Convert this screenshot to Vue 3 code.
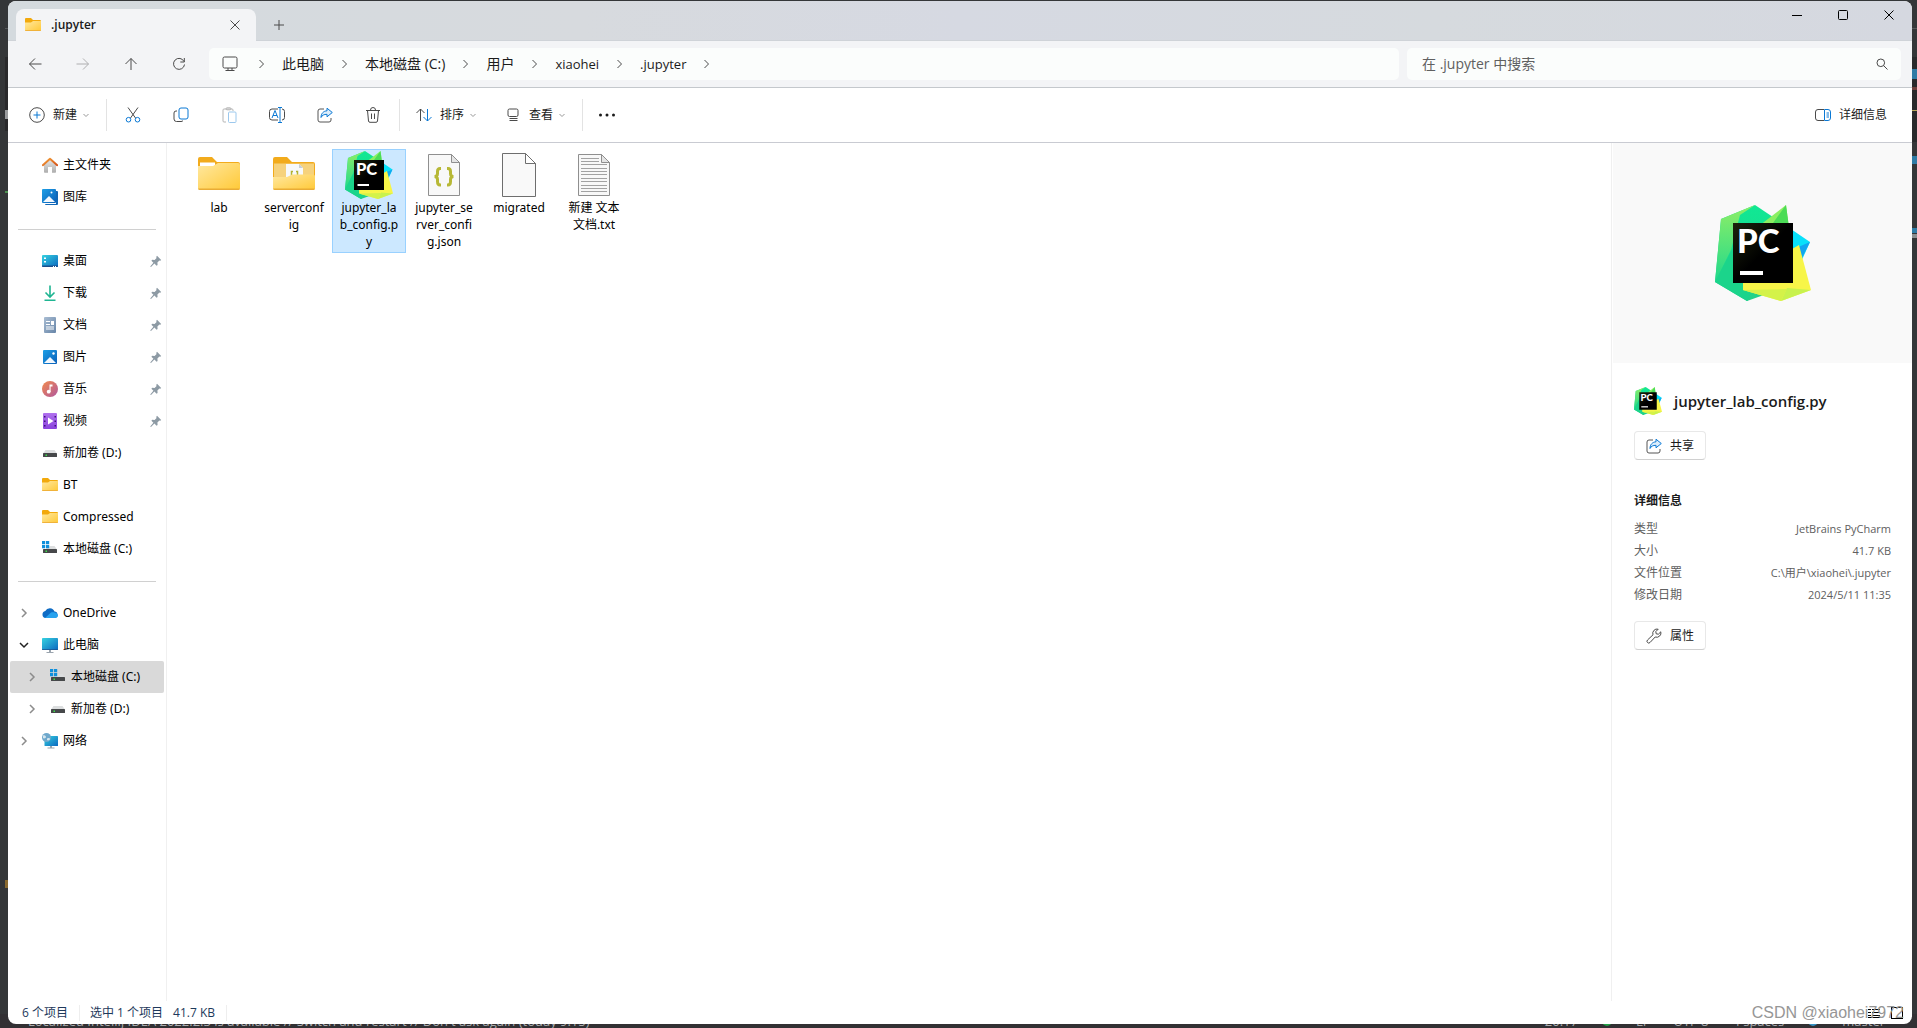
<template>
  <div class="desktop">
    <div class="ide" aria-hidden="true">
      <div class="ide-left">
        <span v-for="mark in leftMarks" class="mark" :style="{ top: mark.y + 'px', height: mark.h + 'px', background: mark.color }"></span>
      </div>
      <div class="ide-right">
        <span v-for="mark in rightMarks" class="mark" :style="{ top: mark.y + 'px', height: mark.h + 'px', background: mark.color }"></span>
      </div>
      <div class="ide-bar">
        <span class="ide-msg">Localized IntelliJ IDEA 2022.2.3 is available // Switch and restart // Don't ask again (today 9:15)</span>
        <span>20:17</span>
        <span class="ide-dot"></span>
        <span>LF</span>
        <span>UTF-8</span>
        <span>4 spaces</span>
        <span class="ide-branch"></span>
        <span>master</span>
      </div>
    </div>

    <svg class="defs" width="0" height="0" aria-hidden="true">
      <defs>
        <linearGradient id="gFolder" x1="0" y1="0" x2="1" y2="1"><stop offset="0" stop-color="#ffe8a0" /><stop offset="1" stop-color="#ffc937" /></linearGradient>
        <linearGradient id="gBlue" x1="0" y1="0" x2="1" y2="1"><stop offset="0" stop-color="#1d9fe6" /><stop offset="1" stop-color="#0a5fb8" /></linearGradient>
        <linearGradient id="gTeal" x1="0" y1="0" x2="1" y2="1"><stop offset="0" stop-color="#35d2e0" /><stop offset="1" stop-color="#0c68c0" /></linearGradient>
        <linearGradient id="gDoc" x1="0" y1="0" x2="1" y2="1"><stop offset="0" stop-color="#a9bdd3" /><stop offset="1" stop-color="#6785a8" /></linearGradient>
        <linearGradient id="gMusic" x1="0" y1="0" x2="1" y2="1"><stop offset="0" stop-color="#f28a4b" /><stop offset="1" stop-color="#b0579f" /></linearGradient>
        <linearGradient id="gVideo" x1="0" y1="0" x2="0" y2="1"><stop offset="0" stop-color="#b070ee" /><stop offset="1" stop-color="#8a44dd" /></linearGradient>
        <linearGradient id="gRoof" x1="0" y1="0" x2="1" y2="1"><stop offset="0" stop-color="#f5a33a" /><stop offset="1" stop-color="#d4521a" /></linearGradient>
        <linearGradient id="gHouse" x1="0" y1="0" x2="0" y2="1"><stop offset="0" stop-color="#e8e8e8" /><stop offset="1" stop-color="#adadad" /></linearGradient>
        <linearGradient id="gPcGreen" x1="0" y1="0" x2="0" y2="1"><stop offset="0" stop-color="#10e894" /><stop offset="1" stop-color="#22d088" /></linearGradient>
        <linearGradient id="gPcSide" x1="0" y1="0" x2="0" y2="1"><stop offset="0" stop-color="#8fee66" /><stop offset="1" stop-color="#1ed98c" /></linearGradient>
        <linearGradient id="gPcBlack" x1="0" y1="0" x2="1" y2="1"><stop offset="0" stop-color="#1c240c" /><stop offset="0.5" stop-color="#000" /></linearGradient>

        <symbol id="folder" viewBox="0 0 16 16">
          <path d="M0 2a1 1 0 0 1 1-1h5l2 2h7a1 1 0 0 1 1 1v8H0z" fill="#f2a90c" />
          <path d="M0 5.500h6L8 4h8v9a1 1 0 0 1-1 1H1a1 1 0 0 1-1-1z" fill="url(#gFolder)" />
          <path d="M0 13h16a1 1 0 0 1-1 1H1a1 1 0 0 1-1-1z" fill="#f0b23a" />
        </symbol>
        <symbol id="home" viewBox="0 0 16 16">
          <path d="M2 7l6-5 6 5v8a.8.8 0 0 1-.8.8H10V10H6v5.800H2.800A.8.8 0 0 1 2 15z" fill="url(#gHouse)" />
          <path d="M.8 8.200L8 1.700l7.200 6.500" fill="none" stroke="url(#gRoof)" stroke-width="2" stroke-linecap="round" stroke-linejoin="round" />
        </symbol>
        <symbol id="gallery" viewBox="0 0 16 16">
          <path d="M14 2h1a1 1 0 0 1 1 1v12a1 1 0 0 1-1 1H4a1 1 0 0 1-1-1h11z" fill="#1267b5" />
          <rect width="14" height="14" rx="1" fill="url(#gBlue)" />
          <path d="M1 13l6-6 6 6z" fill="#f3f8fd" /><circle cx="9.500" cy="3.500" r="1" fill="#fff" />
        </symbol>
        <symbol id="desktop" viewBox="0 0 16 16">
          <rect y="2" width="16" height="12" rx="1" fill="url(#gTeal)" />
          <path d="M0 12.500h16V13a1 1 0 0 1-1 1H1a1 1 0 0 1-1-1z" fill="#1b4f8c" />
          <path d="M2 4.500h2v1.500H2zM2 8h2v1.500H2zM11 13h1v1h-1zM13 13h1v1h-1z" fill="#fff" />
        </symbol>
        <symbol id="download" viewBox="0 0 16 16">
          <path d="M8 .5v11M3.500 7.500L8 12l4.500-4.500M2.500 15.200h11" fill="none" stroke="#1fb592" stroke-width="1.600" />
        </symbol>
        <symbol id="document" viewBox="0 0 16 16">
          <rect x="2" width="12" height="16" rx="1" fill="url(#gDoc)" />
          <path d="M4 4.500h4M4 7.500h4M4 10h8M4 12h8" stroke="#fff" fill="none" /><path d="M9 4h3v4H9z" fill="#fff" />
        </symbol>
        <symbol id="picture" viewBox="0 0 16 16">
          <rect x="1" y="1" width="14" height="14" rx="1" fill="url(#gBlue)" />
          <path d="M2 14l6-6 6 6z" fill="#f3f8fd" /><circle cx="11.500" cy="4.500" r="1.200" fill="#fff" />
        </symbol>
        <symbol id="music" viewBox="0 0 16 16">
          <circle cx="8" cy="8" r="8" fill="url(#gMusic)" />
          <circle cx="6.700" cy="10.700" r="1.900" fill="#fff" /><path d="M7.500 3.500h3v2H8.600v5.500H7.500z" fill="#fff" />
        </symbol>
        <symbol id="video" viewBox="0 0 16 16">
          <rect x="1" width="14" height="16" rx="1" fill="url(#gVideo)" />
          <path d="M2 3h1.500v1.500H2zM2 7.500h1.500V9H2zM2 12h1.500v1.500H2zM12.500 3H14v1.500h-1.500zM12.500 7.500H14V9h-1.500zM12.500 12H14v1.500h-1.500z" fill="#3c1478" />
          <path d="M6 4.500l5.500 3.500L6 11.500z" fill="#fff" />
        </symbol>
        <symbol id="drive" viewBox="0 0 16 16">
          <path d="M3.500 5h9L15 8.500H1z" fill="#dcdedf" />
          <rect x="1" y="8" width="14" height="4" rx=".6" fill="#46484a" /><rect x="3.500" y="9.500" width="1.500" height="1.500" fill="#3ce04a" />
        </symbol>
        <symbol id="sysdrive" viewBox="0 0 16 16">
          <path d="M8 5h4.500L15 8.500H3z" fill="#dcdedf" />
          <path d="M0 0h3.200v3.200H0zM4 0h3.200v3.200H4zM0 4h3.200v3.200H0zM4 4h3.200v3.200H4z" fill="#1090dc" />
          <rect x="1" y="8" width="14" height="4" rx=".6" fill="#46484a" /><rect x="3.500" y="9.500" width="1.500" height="1.500" fill="#3ce04a" />
        </symbol>
        <symbol id="cloud" viewBox="0 0 16 16">
          <path d="M3.500 13A3.500 3.500 0 0 1 3.300 6.100 5 5 0 0 1 12.500 6.500 3.300 3.300 0 0 1 13 13z" fill="#0f6cc4" />
          <path d="M3 13l6-5.500c3-1 7 .5 7 3 0 1.500-1.200 2.500-2.700 2.500z" fill="#27a2ee" />
        </symbol>
        <symbol id="pc" viewBox="0 0 16 16">
          <rect y="1" width="16" height="12" rx=".8" fill="url(#gTeal)" />
          <path d="M0 12.300h16v.7H0z" fill="#1b4f8c" /><path d="M7 13h2v2h2.500v1h-7v-1H7z" fill="#9aa4ae" />
        </symbol>
        <symbol id="network" viewBox="0 0 16 16">
          <rect x="2.500" y="3" width="13.500" height="10" rx=".6" fill="url(#gTeal)" />
          <path d="M8 13h2v1.500h2.500v1h-7v-1H8z" fill="#9aa4ae" />
          <circle cx="4.500" cy="4.500" r="4.500" fill="#6ea8cc" /><path d="M1 2.500c2-1 3 .5 3 1.500S2 6 1 5zM5 5.500c1-1 3-.5 3 .5s-2 2-3 1z" fill="#d4e6ee" />
        </symbol>
        <symbol id="pin" viewBox="0 0 12 12">
          <path d="M7 .8l4.200 4.200-1 .8-.8-.2-2 2 .2 2.400-1 .8-2.200-2.200L1 12l-.8-.6 3.200-3.600-2-2 .8-1 2.400.2 2-2-.4-1z" fill="#8d9aa4" />
        </symbol>
        <symbol id="share" viewBox="0 0 16 16">
          <path d="M7 2H3a2 2 0 0 0-2 2v9a2 2 0 0 0 2 2h9a2 2 0 0 0 2-2v-2" fill="none" stroke="#555" />
          <path d="M10 1.200L15.300 5.500 10 9.800V7.300C7 7.300 5 8.300 4 10.500 4 6.500 6.500 4 10 3.800z" fill="#dcedfb" stroke="#0a78d4" stroke-linejoin="round" />
        </symbol>
        <symbol id="pycharm" viewBox="0 0 96 96">
          <path d="M70 20l25 17-9 20-30-2z" fill="#08e0fa" /><path d="M95 37l-9 18-5-12z" fill="#12a5f0" />
          <path d="M28 82l16 2-12 12z" fill="#149fbd" />
          <path d="M6 14L40 0l30 20-10 66-28 10L0 77z" fill="url(#gPcGreen)" />
          <path d="M6 14L40 0 25 10 16 45 0 77z" fill="url(#gPcSide)" />
          <path d="M0 77l18-34 20 42-6 11z" fill="#1bd48b" />
          <path d="M36 27L71 0l4 30z" fill="#8bef62" /><path d="M71 0l4 30-22-5z" fill="#4bdc56" />
          <path d="M28 72l56-32 12 45-30 11-38-11z" fill="#f7f548" /><path d="M66 96l6-13 24 2z" fill="#c8f24e" /><path d="M28 85l38 11 6-12z" fill="#d4f249" />
          <rect x="18" y="18" width="60" height="60" fill="url(#gPcBlack)" />
          <text x="22" y="48" font-family="Lato, 'Open Sans', sans-serif" font-weight="900" font-size="33" fill="#fff">PC</text>
          <path d="M25 66h23v4H25z" fill="#fff" />
        </symbol>
        <symbol id="bigfolder" viewBox="0 0 48 48">
          <path d="M3 8a2 2 0 0 1 2-2h12l5 5h21a2 2 0 0 1 2 2v20H3z" fill="#f2ab1c" />
          <path d="M5 11.500h15v4H5z" fill="#fff" />
          <path d="M3 15h15l5-3h20a2 2 0 0 1 2 2v23a2 2 0 0 1-2 2H5a2 2 0 0 1-2-2z" fill="url(#gFolder)" />
          <path d="M3 37.500h42a2 2 0 0 1-2 1.500H5a2 2 0 0 1-2-1.500z" fill="#e9ac35" />
        </symbol>
        <symbol id="fullfolder" viewBox="0 0 48 48">
          <path d="M3 8a2 2 0 0 1 2-2h12l5 5h21a2 2 0 0 1 2 2v20H3z" fill="#f2ab1c" />
          <path d="M4 12.500h40v20H4z" fill="#f6d27c" />
          <path d="M16 13h13l4 4v12H16z" fill="#f7f9fb" /><path d="M29 13l4 4h-4z" fill="#c6ced6" />
          <path d="M23 20.500h-1.500v4M26 20.500h1.500v4" stroke="#b3b234" stroke-width="1.500" fill="none" />
          <path d="M3 26h14l5-2.500h21a2 2 0 0 1 2 2V37a2 2 0 0 1-2 2H5a2 2 0 0 1-2-2z" fill="url(#gFolder)" />
          <path d="M3 37.500h42a2 2 0 0 1-2 1.500H5a2 2 0 0 1-2-1.500z" fill="#e9ac35" />
        </symbol>
        <symbol id="json" viewBox="0 0 48 48">
          <path d="M8.500 3.500h23l8 8v33h-31z" fill="#f8f8f8" stroke="#8f8f8f" /><path d="M31.500 3.500v8h8z" fill="#e4e4e4" stroke="#8f8f8f" />
          <path d="M21 17.500h-1c-2 0-2.500 1-2.500 3v2c0 2-1 3-3 3 2 0 3 1 3 3v2c0 2 .5 3.500 2.500 3.500h1M27 17.500h1c2 0 2.500 1 2.500 3v2c0 2 1 3 3 3-2 0-3 1-3 3v2c0 2-.5 3.500-2.500 3.500h-1" fill="none" stroke="#b7b836" stroke-width="3" />
        </symbol>
        <symbol id="blank" viewBox="0 0 48 48">
          <path d="M7.500 2.500h23l10 10v33h-33z" fill="#f9f9f9" stroke="#6e6e6e" /><path d="M30.500 2.500v10h10z" fill="#fff" stroke="#6e6e6e" />
        </symbol>
        <symbol id="text" viewBox="0 0 48 48">
          <path d="M8.500 3.500h23l8 8v33h-31z" fill="#f8f8f8" stroke="#8f8f8f" /><path d="M31.500 3.500v8h8z" fill="#e4e4e4" stroke="#8f8f8f" />
          <path d="M11 7.500h18M11 10.500h18M11 13.500h26M11 17.500h26M11 20.500h26M11 23.500h26M11 27.500h26M11 30.500h26M11 34.500h26M11 37.500h26M11 40.500h26" stroke="#a2a2a2" fill="none" />
        </symbol>
      </defs>
    </svg>

    <main class="window">
      <header class="titlebar">
        <div class="tab">
          <svg class="i16"><use href="#folder" /></svg>
          <span class="tab-title">.jupyter</span>
          <button class="tab-btn" aria-label="关闭标签页">
            <svg class="i10" viewBox="0 0 10 10"><path d="M.5 .5l9 9M9.500 .5l-9 9" /></svg>
          </button>
        </div>
        <button class="tab-btn add" aria-label="新标签页">
          <svg class="i10" viewBox="0 0 10 10"><path d="M5 0v10M0 5h10" /></svg>
        </button>
        <div class="controls">
          <button aria-label="最小化"><svg class="i10" viewBox="0 0 10 10"><path d="M0 5.500h10" /></svg></button>
          <button aria-label="最大化"><svg class="i10" viewBox="0 0 10 10"><rect x=".5" y=".5" width="9" height="9" rx="1" /></svg></button>
          <button aria-label="关闭"><svg class="i10" viewBox="0 0 10 10"><path d="M.5 .5l9 9M9.500 .5l-9 9" /></svg></button>
        </div>
      </header>

      <nav class="navbar">
        <button class="nav-btn" aria-label="后退"><svg class="i16" viewBox="0 0 16 16"><path d="M14.500 8h-12M8 2.500L2.500 8 8 13.500" /></svg></button>
        <button class="nav-btn" aria-label="前进" disabled><svg class="i16" viewBox="0 0 16 16"><path d="M1.500 8h12M8 2.500L13.500 8 8 13.500" /></svg></button>
        <button class="nav-btn" aria-label="向上"><svg class="i16" viewBox="0 0 16 16"><path d="M8 14V2.500M2.500 8L8 2.500 13.500 8" /></svg></button>
        <button class="nav-btn" aria-label="刷新"><svg class="i16" viewBox="0 0 16 16"><path d="M13 5.500A5.500 5.500 0 1 0 13.500 8.500M13.300 2v4h-4" /></svg></button>
        <div class="address">
          <svg class="i16 monitor" viewBox="0 0 16 16"><rect x="1" y="1" width="14" height="11" rx="1.500" /><path d="M6 12v2.500M10 12v2.500M3.500 14.500h9" /></svg>
          <template v-for="crumb in crumbs">
            <svg class="crumb-sep" viewBox="0 0 8 10"><path d="M2 1l4 4-4 4" /></svg>
            <a href="#" :class="{ latin: crumb.latin }">{{ crumb.name }}</a>
          </template>
          <svg class="crumb-sep" viewBox="0 0 8 10"><path d="M2 1l4 4-4 4" /></svg>
        </div>
        <div class="search">
          <input type="text" aria-label="搜索" placeholder="在 .jupyter 中搜索">
          <svg class="i12" viewBox="0 0 12 12"><circle cx="4.800" cy="4.800" r="3.800" /><path d="M7.500 7.500L11.500 11.500" /></svg>
        </div>
      </nav>

      <div class="toolbar">
        <button class="tool">
          <svg class="i16" viewBox="0 0 16 16"><circle cx="8" cy="8" r="7.300" /><path class="blue" d="M8 4.500v7M4.500 8h7" /></svg>
          新建
          <svg class="caret" viewBox="0 0 8 8"><path d="M1.500 3L4 5.500 6.500 3" /></svg>
        </button>
        <span class="sep"></span>
        <button class="icon-tool" aria-label="剪切">
          <svg class="i16" viewBox="0 0 16 16"><path d="M3 .5l7.500 10.500M13 .5L5.500 11" /><g class="blue"><circle cx="3.500" cy="12.700" r="2.300" /><circle cx="12.500" cy="12.700" r="2.300" /></g></svg>
        </button>
        <button class="icon-tool" aria-label="复制">
          <svg class="i16" viewBox="0 0 16 16"><path d="M4 4H3a2 2 0 0 0-2 2v6a2.500 2.500 0 0 0 2.500 2.500H8a2 2 0 0 0 2-1" /><rect class="blue" x="6" y="1" width="9" height="11" rx="2" /></svg>
        </button>
        <button class="icon-tool" aria-label="粘贴" disabled>
          <svg class="i16" viewBox="0 0 16 16"><path d="M5 15H3a1 1 0 0 1-1-1V3a1 1 0 0 1 1-1h8a1 1 0 0 1 1 1v1" /><rect x="5" y=".8" width="5" height="2" rx="1" /><rect class="blue" x="7.500" y="5" width="7.500" height="10.500" rx="1" /></svg>
        </button>
        <button class="icon-tool" aria-label="重命名">
          <svg class="i16" viewBox="0 0 16 16"><path d="M9 2H3a2.500 2.500 0 0 0-2.500 2.500v6A2.500 2.500 0 0 0 3 13h6M13 2a2.500 2.500 0 0 1 2.500 2.500v6A2.500 2.500 0 0 1 13 13" /><path class="blue" d="M11 .5v15M9 .5h4M9 15.500h4M3 11l3-7.500L9 11M4 8.500h4" /></svg>
        </button>
        <button class="icon-tool" aria-label="共享"><svg class="i16"><use href="#share" /></svg></button>
        <button class="icon-tool" aria-label="删除">
          <svg class="i16" viewBox="0 0 16 16"><path d="M1 3.500h14M5.500 3a2.500 2.500 0 0 1 5 0M2.500 3.500l1 10.500a1.500 1.500 0 0 0 1.500 1.300h6a1.500 1.500 0 0 0 1.500-1.300l1-10.500M6.500 6.500v5.500M9.500 6.500v5.500" /></svg>
        </button>
        <span class="sep"></span>
        <button class="tool">
          <svg class="i16" viewBox="0 0 16 16"><path d="M4.500 14V2M.5 6l4-4 4 4" /><path class="blue" d="M11.500 2v12M7.500 10l4 4 4-4" /></svg>
          排序
          <svg class="caret" viewBox="0 0 8 8"><path d="M1.500 3L4 5.500 6.500 3" /></svg>
        </button>
        <button class="tool view">
          <svg class="i16" viewBox="0 0 16 16"><rect x="3" y="2" width="10" height="7.500" rx="1.500" /><path d="M4.500 11.500h8M4.500 13.500h8" /></svg>
          查看
          <svg class="caret" viewBox="0 0 8 8"><path d="M1.500 3L4 5.500 6.500 3" /></svg>
        </button>
        <span class="sep"></span>
        <button class="icon-tool more" aria-label="查看更多">
          <svg class="i16 dots" viewBox="0 0 16 16"><circle cx="1.500" cy="8" r="1.500" /><circle cx="8" cy="8" r="1.500" /><circle cx="14.500" cy="8" r="1.500" /></svg>
        </button>
        <button class="tool details-toggle">
          <svg class="i16" viewBox="0 0 16 16"><path d="M9 2.500H3A2.500 2.500 0 0 0 .5 5v6A2.500 2.500 0 0 0 3 13.500h6" /><path class="blue" d="M9.500 2.500H13A2.500 2.500 0 0 1 15.500 5v6a2.500 2.500 0 0 1-2.500 2.500H9.500zM11.500 6h2.500M11.500 8h2.500M11.500 10h2.500" /></svg>
          详细信息
        </button>
      </div>

      <div class="content">
        <aside class="sidebar">
          <template v-for="(group, index) in groups">
            <hr v-if="index > 0">
            <ul>
              <li v-for="item in group" :class="{ child: item.child, selected: item.selected }">
                <svg class="twisty" :class="{ open: item.open }" viewBox="0 0 10 10"><path v-if="item.tree" :d="item.open ? 'M1 3l4 4 4-4' : 'M3 1l4 4-4 4'" /></svg>
                <svg class="i16"><use :href="'#' + item.icon" /></svg>
                <a href="#">{{ item.name }}</a>
                <svg v-if="item.pinned" class="pin"><use href="#pin" /></svg>
              </li>
            </ul>
          </template>
        </aside>

        <section class="files">
          <button v-for="file in files" class="file" :class="{ selected: file.selected }">
            <svg class="i48"><use :href="'#' + file.icon" /></svg>
            <span>{{ file.label }}</span>
          </button>
        </section>

        <aside class="details">
          <div class="preview"><svg class="i96"><use href="#pycharm" /></svg></div>
          <div class="details-body">
            <h1><svg class="i28"><use href="#pycharm" /></svg>jupyter_lab_config.py</h1>
            <button class="card-btn"><svg class="i16"><use href="#share" /></svg>共享</button>
            <h2>详细信息</h2>
            <dl>
              <div v-for="row in info"><dt>{{ row[0] }}</dt><dd>{{ row[1] }}</dd></div>
            </dl>
            <button class="card-btn">
              <svg class="i16" viewBox="0 0 16 16"><path d="M14.800 3.800a4.300 4.300 0 0 1-5.600 5.200L4 14.500a1.700 1.700 0 0 1-2.500-2.500L7 6.800A4.300 4.300 0 0 1 12.200 1.200L9.800 3.600l.4 2.200 2.200.4z" /></svg>
              属性
            </button>
          </div>
        </aside>
      </div>

      <footer class="status">
        <span class="count">6 个项目</span>
        <span class="count">选中 1 个项目<span class="size">41.7 KB</span></span>
        <div class="modes">
          <button aria-label="详细信息视图"><svg class="i14" viewBox="0 0 14 14"><path d="M1 3.500h3M5 3.500h8M1 6.500h3M5 6.500h8M1 9.500h3M5 9.500h8M1 11.500h12" /></svg></button>
          <button aria-label="大图标视图"><svg class="i14" viewBox="0 0 14 14"><rect x="1.500" y="1.500" width="11" height="11" /></svg></button>
        </div>
      </footer>
    </main>
    <div class="watermark">CSDN @xiaohei7972</div>
  </div>
</template>

<script setup>
  const crumbs = [
    { name: '此电脑' },
    { name: '本地磁盘 (C:)' },
    { name: '用户' },
    { name: 'xiaohei', latin: true },
    { name: '.jupyter', latin: true },
  ];

  const groups = [
    [
      { name: '主文件夹', icon: 'home' },
      { name: '图库', icon: 'gallery' },
    ],
    [
      { name: '桌面', icon: 'desktop', pinned: true },
      { name: '下载', icon: 'download', pinned: true },
      { name: '文档', icon: 'document', pinned: true },
      { name: '图片', icon: 'picture', pinned: true },
      { name: '音乐', icon: 'music', pinned: true },
      { name: '视频', icon: 'video', pinned: true },
      { name: '新加卷 (D:)', icon: 'drive' },
      { name: 'BT', icon: 'folder' },
      { name: 'Compressed', icon: 'folder' },
      { name: '本地磁盘 (C:)', icon: 'sysdrive' },
    ],
    [
      { name: 'OneDrive', icon: 'cloud', tree: true },
      { name: '此电脑', icon: 'pc', tree: true, open: true },
      { name: '本地磁盘 (C:)', icon: 'sysdrive', tree: true, child: true, selected: true },
      { name: '新加卷 (D:)', icon: 'drive', tree: true, child: true },
      { name: '网络', icon: 'network', tree: true },
    ],
  ];

  // labels keep their own line breaks, as the icon view wraps by character
  const files = [
    { label: 'lab', icon: 'bigfolder' },
    { label: 'serverconf\nig', icon: 'fullfolder' },
    { label: 'jupyter_la\nb_config.p\ny', icon: 'pycharm', selected: true },
    { label: 'jupyter_se\nrver_confi\ng.json', icon: 'json' },
    { label: 'migrated', icon: 'blank' },
    { label: '新建 文本\n文档.txt', icon: 'text' },
  ];

  const info = [
    ['类型', 'JetBrains PyCharm'],
    ['大小', '41.7 KB'],
    ['文件位置', 'C:\\用户\\xiaohei\\.jupyter'],
    ['修改日期', '2024/5/11 11:35'],
  ];

  // bits of the editor that show beside the window
  const leftMarks = [
    { y: 28, h: 1, color: '#555759' },
    { y: 57, h: 74, color: '#29292b' },
    { y: 110, h: 9, color: '#9a9c9e' },
    { y: 191, h: 2, color: '#4c9150' },
    { y: 880, h: 8, color: '#8a6a30' },
  ];
  const rightMarks = [
    { y: 28, h: 1, color: '#555759' },
    { y: 57, h: 85, color: '#292a2c' },
    { y: 69, h: 10, color: '#2f7ba5' },
    { y: 87, h: 3, color: '#6e3f3c' },
    { y: 110, h: 1, color: '#b8a858' },
    { y: 156, h: 8, color: '#2f7ba5' },
    { y: 228, h: 5, color: '#2f7ba5' },
    { y: 234, h: 4, color: '#8c8e90' },
  ];
</script>

<style>
  body {
    background: #343638;
  }
</style>

<style scoped>
  .desktop {
    position: relative;
    box-sizing: border-box;
    height: 100vh;
    padding: 1px 5px 4px 8px;
    overflow: hidden;
    background: #343638;
    color: #1b1b1b;
    font: 12px/16px "Open Sans", "Noto Sans CJK SC", sans-serif;
  }

  .defs {
    position: absolute;
  }

  .ide {
    position: absolute;
    inset: 0;
    color: #a9abad;
  }

  .ide-left,
  .ide-right {
    position: absolute;
    top: 0;
    bottom: 0;
    left: 0;
    width: 8px;
  }

  .ide-right {
    right: 0;
    left: auto;
    width: 5px;
  }

  .mark {
    position: absolute;
    right: 0;
    width: 100%;
  }

  .ide-left .mark {
    width: 3px;
  }

  .ide-bar {
    position: absolute;
    bottom: 0;
    left: 0;
    right: 0;
    display: flex;
    align-items: center;
    gap: 24px;
    height: 14px;
    padding: 0 32px 0 28px;
    background: #323033;
    font-size: 13px;
  }

  .ide-msg {
    flex: 1;
  }

  .ide-dot,
  .ide-branch {
    width: 10px;
    height: 10px;
    border-radius: 50%;
    background: #24a148;
  }

  .ide-branch {
    background: #3592c4;
  }

  .window {
    position: relative;
    display: flex;
    flex-direction: column;
    height: 100%;
    border-radius: 8px;
    overflow: hidden;
    background: #fff;
  }

  button {
    display: flex;
    align-items: center;
    justify-content: center;
    margin: 0;
    padding: 0;
    border: 0;
    background: none;
    color: inherit;
    font: inherit;
  }

  a {
    color: inherit;
    text-decoration: none;
  }

  svg {
    flex: none;
    fill: none;
    stroke: #4a4a4a;
  }

  use {
    stroke: none;
  }

  .blue {
    stroke: #0a78d4;
  }

  .i10 { width: 10px; height: 10px; }
  .i12 { width: 12px; height: 12px; }
  .i14 { width: 14px; height: 14px; }
  .i16 { width: 16px; height: 16px; }
  .i28 { width: 28px; height: 28px; }
  .i48 { width: 48px; height: 48px; }
  .i96 { width: 96px; height: 96px; }

  .titlebar {
    display: flex;
    align-items: flex-start;
    box-sizing: border-box;
    height: 40px;
    padding-left: 8px;
    border-bottom: 1px solid #cfd3d8;
    background: linear-gradient(90deg, #d4dade, #d7dade 30%, #d6d9e2 50%, #d6dade 75%, #d5d8e0);
  }

  .tab {
    display: flex;
    align-items: center;
    box-sizing: border-box;
    width: 240px;
    height: 32px;
    margin-top: 8px;
    padding: 0 11px 0 9px;
    border-radius: 8px 8px 0 0;
    background: #f3f4f6;
  }

  .tab-title {
    flex: 1;
    padding-left: 10px;
    font-weight: 600;
  }

  .tab-btn {
    width: 20px;
    height: 20px;
  }

  .tab-btn.add {
    margin: 14px 0 0 13px;
  }

  .controls {
    display: flex;
    margin-left: auto;
  }

  .controls button {
    width: 46px;
    height: 28px;
  }

  .controls svg {
    stroke: #000;
  }

  .navbar {
    display: flex;
    align-items: center;
    box-sizing: border-box;
    height: 47px;
    padding: 0 11px 0 3px;
    border-bottom: 1px solid #c4c8cc;
    background: #f3f4f6;
    font-size: 14px;
    line-height: 20px;
  }

  .nav-btn {
    width: 48px;
    height: 32px;
  }

  .nav-btn:disabled svg,
  .icon-tool:disabled svg {
    opacity: 0.4;
  }

  .address {
    display: flex;
    flex: 1;
    align-items: center;
    height: 32px;
    margin: 0 8px 0 6px;
    padding-left: 13px;
    border-radius: 5px;
    background: #fbfdfc;
  }

  .address .latin {
    font-size: 13px;
  }

  .monitor {
    margin-right: 3px;
  }

  .crumb-sep {
    width: 9px;
    height: 10px;
    padding: 0 16px;
  }

  .search {
    display: flex;
    align-items: center;
    box-sizing: border-box;
    width: 494px;
    height: 32px;
    padding: 0 13px 0 15px;
    border-radius: 5px;
    background: #fbfdfc;
  }

  .search input {
    flex: 1;
    padding: 0;
    border: 0;
    outline: 0;
    background: none;
    font: inherit;
  }

  .search input::placeholder {
    color: #606060;
    opacity: 1;
  }

  .toolbar {
    display: flex;
    align-items: center;
    box-sizing: border-box;
    height: 55px;
    padding: 0 25px 0 21px;
    border-bottom: 1px solid #c9cbd2;
  }

  .tool {
    gap: 8px;
    height: 32px;
  }

  .caret {
    width: 8px;
    height: 8px;
    margin-left: -3px;
    stroke: #999;
  }

  .sep {
    width: 1px;
    height: 32px;
    margin: 0 2px 0 16px;
    background: #e3e3e3;
  }

  .icon-tool {
    width: 48px;
    height: 32px;
  }

  .icon-tool + .sep {
    margin: 0 16px 0 2px;
  }

  .icon-tool.more {
    width: 44px;
  }

  .tool.view {
    margin-left: 28px;
  }

  .dots {
    fill: #1b1b1b;
    stroke: none;
  }

  .details-toggle {
    margin-left: auto;
  }

  .content {
    display: flex;
    flex: 1;
    min-height: 0;
  }

  .sidebar {
    box-sizing: border-box;
    width: 159px;
    padding: 6px 2px 0;
    border-right: 1px solid #f0f0f0;
    color: #000;
    font-family: "Noto Sans", "Noto Sans CJK SC", sans-serif;
  }

  .sidebar ul {
    margin: 0;
    padding: 0;
    list-style: none;
  }

  .sidebar li {
    display: flex;
    align-items: center;
    height: 32px;
    padding-left: 9px;
  }

  .sidebar li.child {
    padding-left: 17px;
  }

  .sidebar li.selected {
    border-radius: 2px;
    background: #d9d9d9;
  }

  .sidebar a {
    flex: 1;
    padding-left: 5px;
  }

  .sidebar hr {
    height: 1px;
    margin: 16px 8px 15px;
    border: 0;
    background: #d0d0d0;
  }

  .twisty {
    width: 10px;
    height: 10px;
    margin-right: 13px;
    stroke: #8c8c8c;
    stroke-width: 1.5;
  }

  .twisty.open {
    stroke: #222;
  }

  .pin {
    width: 12px;
    height: 12px;
    margin-right: 2px;
  }

  .files {
    display: flex;
    flex: 1;
    align-items: flex-start;
    gap: 1px;
    padding: 6px 0 0 15px;
    color: #000;
    font-family: "Noto Sans", "Noto Sans CJK SC", sans-serif;
  }

  .file {
    flex-direction: column;
    box-sizing: border-box;
    width: 74px;
    padding: 1px 0 2px;
    border: 1px solid transparent;
    line-height: 17px;
    white-space: pre;
  }

  .file.selected {
    border-color: #99d1ff;
    background: #cce8ff;
  }

  .details {
    width: 299px;
    padding-left: 1px;
    border-left: 1px solid #f0f0f0;
  }

  .preview {
    display: flex;
    align-items: center;
    justify-content: center;
    height: 220px;
    background: #f9f9f9;
  }

  .details-body {
    padding: 24px 21px 0;
  }

  h1 {
    display: flex;
    align-items: center;
    gap: 12px;
    margin: 0 0 16px;
    font-size: 15px;
    line-height: 28px;
    font-weight: 600;
  }

  h2 {
    margin: 32px 0 8px;
    font-size: 12px;
    line-height: 18px;
    font-weight: 700;
  }

  .card-btn {
    gap: 8px;
    box-sizing: border-box;
    width: 72px;
    height: 29px;
    border: 1px solid #e8e8e8;
    border-bottom-color: #d0d0d0;
    border-radius: 4px;
  }

  dl {
    margin: 0 0 15px;
    color: #606060;
  }

  dl div {
    display: flex;
    justify-content: space-between;
    line-height: 22px;
  }

  dd {
    margin: 0;
    font-size: 11px;
  }

  .status {
    display: flex;
    align-items: center;
    height: 23px;
    padding: 0 8px 0 14px;
    color: #1e395b;
  }

  .count {
    margin-right: 10px;
    padding-right: 11px;
    border-right: 1px solid #eee;
  }

  .size {
    margin-left: 10px;
  }

  .modes {
    display: flex;
    gap: 9px;
    margin-left: auto;
  }

  .modes svg {
    stroke: #000;
  }

  .watermark {
    position: absolute;
    right: 13px;
    bottom: 5px;
    color: #969696;
    font: 16px/20px "Liberation Sans", sans-serif;
  }
</style>
